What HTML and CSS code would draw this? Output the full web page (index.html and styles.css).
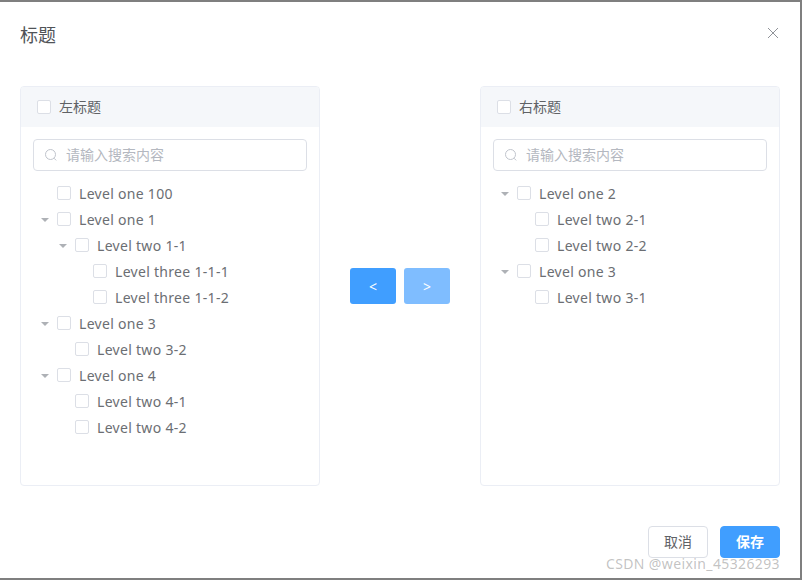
FILE: index.html
```html
<!DOCTYPE html>
<html lang="zh">
<head>
<meta charset="utf-8">
<title>标题</title>
<link rel="stylesheet" href="styles.css">
</head>
<body>
<div class="dialog">
  <header class="dialog-header">
    <span class="dialog-title">标题</span>
    <svg class="close-icon" viewBox="0 0 12 12" width="12" height="12"><path d="M1 1L11 11M11 1L1 11" fill="none" stroke="#909399" stroke-width="1"/></svg>
  </header>
  <main class="transfer">
    <section class="panel">
      <div class="panel-head"><span class="check"></span><span class="panel-title">左标题</span></div>
      <div class="panel-body">
        <div class="search">
          <svg class="search-icon" viewBox="0 0 14 14" width="14" height="14"><circle cx="6.5" cy="6.5" r="5" fill="none" stroke="#c0c4cc"/><path d="M10 10.2L12.2 12.4" stroke="#c0c4cc" fill="none"/></svg>
          <span class="placeholder">请输入搜索内容</span>
        </div>
        <ul class="tree">
          <li class="node l1 leaf"><i class="arrow"></i><span class="check"></span><span>Level one 100</span></li>
          <li class="node l1"><i class="arrow"></i><span class="check"></span><span>Level one 1</span></li>
          <li class="node l2"><i class="arrow"></i><span class="check"></span><span>Level two 1-1</span></li>
          <li class="node l3 leaf"><i class="arrow"></i><span class="check"></span><span>Level three 1-1-1</span></li>
          <li class="node l3 leaf"><i class="arrow"></i><span class="check"></span><span>Level three 1-1-2</span></li>
          <li class="node l1"><i class="arrow"></i><span class="check"></span><span>Level one 3</span></li>
          <li class="node l2 leaf"><i class="arrow"></i><span class="check"></span><span>Level two 3-2</span></li>
          <li class="node l1"><i class="arrow"></i><span class="check"></span><span>Level one 4</span></li>
          <li class="node l2 leaf"><i class="arrow"></i><span class="check"></span><span>Level two 4-1</span></li>
          <li class="node l2 leaf"><i class="arrow"></i><span class="check"></span><span>Level two 4-2</span></li>
        </ul>
      </div>
    </section>
    <div class="actions">
      <button class="btn-move">&lt;</button>
      <button class="btn-move off">&gt;</button>
    </div>
    <section class="panel">
      <div class="panel-head"><span class="check"></span><span class="panel-title">右标题</span></div>
      <div class="panel-body">
        <div class="search">
          <svg class="search-icon" viewBox="0 0 14 14" width="14" height="14"><circle cx="6.5" cy="6.5" r="5" fill="none" stroke="#c0c4cc"/><path d="M10 10.2L12.2 12.4" stroke="#c0c4cc" fill="none"/></svg>
          <span class="placeholder">请输入搜索内容</span>
        </div>
        <ul class="tree">
          <li class="node l1"><i class="arrow"></i><span class="check"></span><span>Level one 2</span></li>
          <li class="node l2 leaf"><i class="arrow"></i><span class="check"></span><span>Level two 2-1</span></li>
          <li class="node l2 leaf"><i class="arrow"></i><span class="check"></span><span>Level two 2-2</span></li>
          <li class="node l1"><i class="arrow"></i><span class="check"></span><span>Level one 3</span></li>
          <li class="node l2 leaf"><i class="arrow"></i><span class="check"></span><span>Level two 3-1</span></li>
        </ul>
      </div>
    </section>
  </main>
  <footer class="dialog-footer">
    <button class="btn">取消</button>
    <button class="btn primary">保存</button>
    <span class="watermark">CSDN @weixin_45326293</span>
  </footer>
</div>
</body>
</html>
```
FILE: styles.css
```css
* { box-sizing: border-box; }
html, body { margin: 0; padding: 0; height: 100%; }
body { background: #7f7f7f; font-family: "Noto Sans", "Noto Sans CJK SC", sans-serif; overflow: hidden; }
.dialog { position: relative; width: 800px; height: 576px; margin-top: 2px; background: #fff; display: flex; flex-direction: column; }
.dialog-header { height: 84px; padding: 20px 21px 0 20px; display: flex; justify-content: space-between; align-items: flex-start; flex: none; }
.dialog-title { font-size: 18px; line-height: 24px; color: #505357; font-family: "Noto Sans CJK SC", sans-serif; }
.close-icon { margin-top: 5px; }
.transfer { display: flex; justify-content: space-between; padding: 0 20px; flex: none; }
.panel { width: 300px; height: 400px; border: 1px solid #ebeef5; border-radius: 4px; overflow: hidden; }
.panel-head { height: 40px; background: #f5f7fa; display: flex; align-items: center; padding-left: 16px; }
.panel-title { margin-left: 8px; padding-bottom: 2px; font-size: 14px; color: #606266; font-family: "Noto Sans CJK SC", sans-serif; }
.panel-body { padding: 12px; }
.check { display: inline-block; flex: none; width: 14px; height: 14px; background: #fff; border: 1px solid #dcdfe6; border-radius: 2px; }
.search { height: 32px; border: 1px solid #dcdfe6; border-radius: 4px; display: flex; align-items: center; padding-left: 10px; }
.placeholder { margin-left: 8px; padding-bottom: 2px; font-size: 14px; color: #b4b8c0; font-family: "Noto Sans CJK SC", sans-serif; }
.tree { list-style: none; margin: 9px 0 0; padding: 0; }
.node { height: 26px; display: flex; align-items: center; font-size: 14px; letter-spacing: .3px; color: #6b6e73; }
.node .check { margin-right: 8px; }
.l1 { padding-left: 6px; }
.l2 { padding-left: 24px; }
.l3 { padding-left: 42px; }
.arrow { flex: none; height: 0; width: 12px; margin-right: 6px; position: relative; }
.arrow::before { content: ""; position: absolute; left: 2px; top: -1px; border-style: solid; border-width: 4px 4px 0; border-color: #aeb1b6 transparent transparent; }
.leaf .arrow::before { display: none; }
.actions { display: flex; align-items: center; gap: 8px; }
.btn-move { width: 46px; height: 36px; border: 0; border-radius: 3px; background: #409eff; color: #fff; font-size: 14px; font-family: "Noto Sans", sans-serif; padding: 0; }
.btn-move.off { background: #7fbdff; }
.dialog-footer { flex: 1; display: flex; justify-content: flex-end; align-items: flex-start; gap: 12px; padding: 40px 20px 0; }
.btn { width: 60px; height: 32px; border: 1px solid #dcdfe6; border-radius: 4px; background: #fff; color: #606266; font-size: 14px; font-family: "Noto Sans CJK SC", sans-serif; padding: 0 0 2px; }
.btn.primary { background: #409eff; border-color: #409eff; color: #fff; font-weight: 700; }
.watermark { position: absolute; right: 20px; bottom: 4px; font-size: 14px; line-height: 20px; letter-spacing: .38px; color: rgba(120,120,120,.45); }
```
